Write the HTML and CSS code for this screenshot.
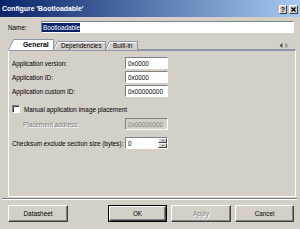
FILE: index.html
```html
<!DOCTYPE html>
<html>
<head>
<meta charset="utf-8">
<link rel="stylesheet" href="styles.css">
</head>
<body>
<div class="window">
  <div class="titlebar">
    <span class="title">Configure 'Bootloadable'</span>
    <div class="tb-buttons">
      <span class="tb-btn tb-help">?</span>
      <span class="tb-btn tb-close"><svg width="5" height="5" viewBox="0 0 5 5"><path d="M0.5 0.5L4.5 4.5M4.5 0.5L0.5 4.5" stroke="#000" stroke-width="1.3"/></svg></span>
    </div>
  </div>

  <div class="name-row">
    <span class="name-label">Name:</span>
    <div class="field name-field"><span class="sel">Bootloadable</span></div>
  </div>

  <div class="tabstrip">
    <div class="tab tab-general">
      <svg class="tab-shape" width="46" height="11" viewBox="0 0 46 11"><path d="M0.5 11 L5.5 0.5 L45.5 0.5 L45.5 11" fill="#fff" stroke="#8c95ad"/></svg>
      <span class="tab-text">General</span>
    </div>
    <div class="tab tab-dep">
      <svg class="tab-shape" width="53" height="9" viewBox="0 0 53 9"><path d="M0.5 9 L4.5 0.5 L52.5 0.5 L52.5 9" fill="#d4d0c8" stroke="#8c95ad"/><path d="M1.8 8 L5.2 1.5 L51.5 1.5" fill="none" stroke="#fff"/></svg>
      <span class="tab-text">Dependencies</span>
    </div>
    <div class="tab tab-built">
      <svg class="tab-shape" width="33" height="9" viewBox="0 0 33 9"><path d="M0.5 9 L4.5 0.5 L32.5 0.5 L32.5 9" fill="#d4d0c8" stroke="#8c95ad"/><path d="M1.8 8 L5.2 1.5 L31.5 1.5" fill="none" stroke="#fff"/></svg>
      <span class="tab-text">Built-in</span>
    </div>
    <div class="tab-arrows">
      <svg width="10" height="5" viewBox="0 0 10 5"><path d="M0.5 2.5 L3 0.3 L3 4.7 Z" fill="#505050"/><rect x="3" y="0" width="0.8" height="5" fill="#909090"/><path d="M6.8 0.6 L9.2 2.5 L6.8 4.4 Z" fill="none" stroke="#707070" stroke-width="0.7"/></svg>
    </div>
  </div>

  <div class="panel">
    <div class="form-row row-first">
      <span class="label">Application version:</span>
      <div class="field small-field">0x0000</div>
    </div>
    <div class="form-row">
      <span class="label">Application ID:</span>
      <div class="field small-field">0x0000</div>
    </div>
    <div class="form-row">
      <span class="label">Application custom ID:</span>
      <div class="field small-field">0x00000000</div>
    </div>
    <div class="check-row">
      <span class="checkbox"></span>
      <span class="check-label">Manual application image placement</span>
    </div>
    <div class="form-row row-placement">
      <span class="label label-indent disabled">Placement address:</span>
      <div class="field small-field field-disabled">0x00000000</div>
    </div>
    <div class="form-row row-checksum">
      <span class="label">Checksum exclude section size (bytes):</span>
      <div class="field small-field spin-field">
        <span class="spin-value">0</span>
        <span class="spin">
          <span class="spin-btn"><span class="arrow-up"></span></span>
          <span class="spin-btn"><span class="arrow-down"></span></span>
        </span>
      </div>
    </div>
  </div>

  <div class="separator"></div>

  <div class="button-row">
    <span class="btn">Datasheet</span>
    <span class="btn-default"><span class="btn">OK</span></span>
    <span class="btn btn-disabled">Apply</span>
    <span class="btn">Cancel</span>
  </div>
</div>
</body>
</html>
```
FILE: styles.css
```css
* { box-sizing: border-box; }
html, body { margin: 0; padding: 0; }
body {
  width: 300px;
  height: 229px;
  overflow: hidden;
  background: #d4d0c8;
  font-family: "Liberation Sans", Arial, sans-serif;
  font-size: 6.35px;
  color: #000;
}
.window { width: 300px; height: 229px; }

.titlebar {
  height: 17px;
  display: flex;
  align-items: flex-start;
  background: linear-gradient(to right, #0a246a, #a6caf0);
  padding: 0 2px 0 2px;
}
.title {
  flex: 1;
  color: #fff;
  font-weight: bold;
  font-size: 6.9px;
  line-height: 17px;
}
.tb-buttons { display: flex; gap: 2px; margin-top: 5px; }
.tb-btn {
  height: 9px;
  background: #d4d0c8;
  border: 1px solid;
  border-color: #fff #404040 #404040 #fff;
  display: flex;
  align-items: center;
  justify-content: center;
  font-weight: bold;
  font-size: 7px;
  line-height: 1;
}
.tb-help { width: 8px; }
.tb-close { width: 9px; }

.name-row {
  display: flex;
  align-items: center;
  height: 12px;
  margin-top: 4px;
  padding: 0 6px 0 8px;
}
.name-label { width: 33px; }
.field {
  background: #fff;
  border: 1px solid;
  border-color: #808080 #fff #fff #808080;
  display: flex;
  align-items: center;
  padding-left: 2px;
  height: 12px;
}
.name-field { flex: 1; padding-left: 0; }
.sel { background: #0a246a; color: #fff; line-height: 9px; padding: 0 0 0 1px; }

.tabstrip {
  display: flex;
  align-items: flex-end;
  height: 10px;
  margin-top: 6px;
  padding-left: 8px;
  position: relative;
}
.tab { position: relative; display: flex; align-items: center; }
.tab-shape { position: absolute; left: 0; top: 0; }
.tab-text { position: relative; }
.tab-general { width: 46px; height: 11px; padding-left: 15px; margin-bottom: -1px; z-index: 2; }
.tab-general .tab-text { font-weight: bold; font-size: 6.9px; }
.tab-dep { width: 53px; height: 8px; padding-left: 8px; margin-left: -1px; }
.tab-built { width: 33px; height: 8px; padding-left: 8px; margin-left: -1px; }
.tab-arrows { margin-left: auto; margin-right: 11px; align-self: center; display: flex; margin-top: 3px; }

.panel {
  margin-left: 8px;
  width: 288px;
  height: 148px;
  border-top: 2px solid #8c95ad;
  border-left: 1px solid #fff;
  border-right: 1px solid #fff;
  border-bottom: 1px solid #fff;
  padding: 6px 0 0 3px;
  display: flex;
  flex-direction: column;
}
.form-row { display: flex; align-items: center; height: 12px; margin-top: 2px; }
.form-row.row-first { margin-top: 0; }
.label { width: 113px; }
.label-indent { padding-left: 11px; }
.small-field { width: 43px; }
.disabled { color: #808080; text-shadow: 1px 1px 0 #fff; }
.field-disabled { background: #d4d0c8; color: #808080; }

.check-row { display: flex; align-items: center; height: 8px; margin-top: 8px; }
.checkbox {
  width: 8px;
  height: 8px;
  background: #fff;
  border: 1px solid;
  border-color: #808080 #fff #fff #808080;
  box-shadow: inset 1px 1px 0 #404040;
  margin-right: 4px;
}
.row-placement { margin-top: 5px; }
.row-checksum { margin-top: 7px; }

.spin-field { justify-content: space-between; padding-right: 0; }
.spin { display: flex; flex-direction: column; height: 10px; width: 9px; }
.spin-btn {
  flex: 1;
  background: #d4d0c8;
  border: 1px solid;
  border-color: #fff #404040 #404040 #fff;
  display: flex;
  align-items: center;
  justify-content: center;
}
.arrow-up { width: 0; height: 0; border-left: 1.5px solid transparent; border-right: 1.5px solid transparent; border-bottom: 1.5px solid #000; }
.arrow-down { width: 0; height: 0; border-left: 1.5px solid transparent; border-right: 1.5px solid transparent; border-top: 1.5px solid #000; }

.separator {
  margin: 1px 3px 0 2px;
  height: 2px;
  border-top: 1px solid #808080;
  border-bottom: 1px solid #fff;
}

.button-row {
  display: flex;
  align-items: flex-start;
  margin-top: 5px;
  padding: 0 6px 0 8px;
  gap: 4px;
}
.btn {
  height: 17px;
  width: 60px;
  background: #d4d0c8;
  border: 1px solid;
  border-color: #fff #404040 #404040 #fff;
  box-shadow: inset -1px -1px 0 #808080;
  display: flex;
  align-items: center;
  justify-content: center;
}
.btn-default { margin-left: auto; border: 1px solid #000; display: flex; }
.btn-default .btn { width: 57px; height: 15px; }
.btn-disabled { color: #808080; text-shadow: 1px 1px 0 #fff; }
.button-row > .btn:last-child { width: 59px; }
```
